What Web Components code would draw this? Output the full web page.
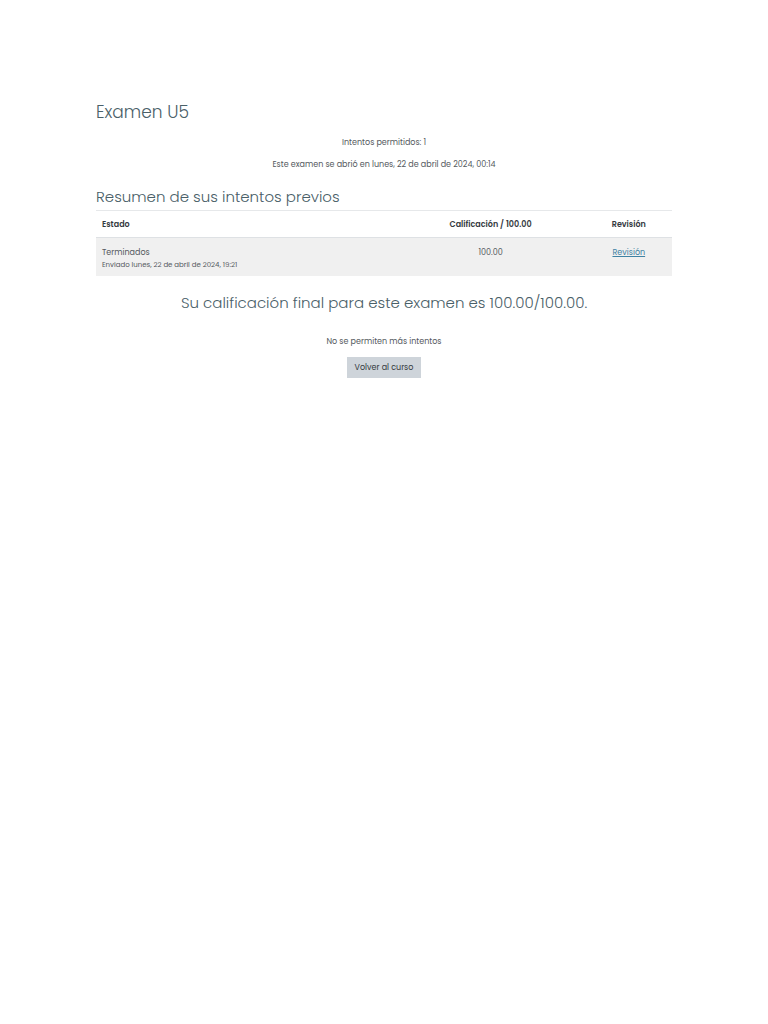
<!DOCTYPE html>
<html lang="es">
<head>
<meta charset="utf-8">
<meta name="viewport" content="width=device-width, initial-scale=1">
<title>Examen U5</title>
<style>
  body {
    margin: 0;
    background: #fff;
    color: #54595e;
    font-family: Poppins, Inter, "Open Sans", sans-serif;
    font-size: 8px;
    line-height: 12px;
  }
</style>
</head>
<body>

<quiz-page>
  <quiz-heading level="1">Examen U5</quiz-heading>
  <quiz-info>
    <p>Intentos permitidos: 1</p>
    <p>Este examen se abrió en lunes, 22 de abril de 2024, 00:14</p>
  </quiz-info>
  <quiz-heading level="2">Resumen de sus intentos previos</quiz-heading>
  <attempt-table state="Terminados" sent="Enviado lunes, 22 de abril de 2024, 19:21" grade="100.00" max="100.00"></attempt-table>
  <quiz-feedback>
    <span slot="grade">Su calificación final para este examen es 100.00/100.00.</span>
    <span slot="notice">No se permiten más intentos</span>
    <course-button>Volver al curso</course-button>
  </quiz-feedback>
</quiz-page>

<script>
class QuizPage extends HTMLElement {
  constructor() {
    super();

    this.attachShadow({mode: 'open'});
    this.shadowRoot.innerHTML = `
      <style>
        :host {
          display: block;
          padding: 100px 12.5%;
        }
      </style>
      <main><slot></slot></main>
    `;
  }
}

class QuizHeading extends HTMLElement {
  constructor() {
    super();

    this.attachShadow({mode: 'open'});
  }

  connectedCallback() {
    const tag = this.getAttribute('level') === '1' ? 'h1' : 'h2';

    this.shadowRoot.innerHTML = `
      <style>
        :host {
          display: block;
          color: #4a6068;
        }
        h1, h2 {
          margin: 0;
          font-weight: 300;
        }
        h1 {
          font-size: 17px;
          line-height: 24px;
        }
        h2 {
          margin-bottom: 2px;
          font-size: 15px;
          line-height: 22px;
        }
      </style>
      <${tag}><slot></slot></${tag}>
    `;
  }
}

class QuizInfo extends HTMLElement {
  constructor() {
    super();

    this.attachShadow({mode: 'open'});
    this.shadowRoot.innerHTML = `
      <style>
        :host {
          display: flex;
          flex-direction: column;
          gap: 10px;
          padding: 13px 0 15px;
          text-align: center;
        }
        ::slotted(p) {
          margin: 0;
        }
      </style>
      <slot></slot>
    `;
  }
}

class AttemptTable extends HTMLElement {
  constructor() {
    super();

    this.attachShadow({mode: 'open'});
  }

  connectedCallback() {
    const state = this.getAttribute('state');
    const sent = this.getAttribute('sent');
    const grade = this.getAttribute('grade');
    const max = this.getAttribute('max');

    this.shadowRoot.innerHTML = `
      <style>
        :host {
          display: block;
        }
        table {
          width: 100%;
          table-layout: fixed;
          border-collapse: collapse;
          font-size: inherit;
        }
        .col-state {
          width: 52%;
        }
        .col-grade {
          width: 33%;
        }
        th, td {
          padding: 8px 6px 6px;
          border-top: 1px solid #e6e8ea;
          text-align: center;
          vertical-align: top;
        }
        th {
          border-bottom: 1px solid #dee1e4;
          color: #34393e;
          font-weight: 600;
        }
        td {
          padding: 9px 6px 6px;
          background: #f0f0f0;
        }
        th:first-child, td:first-child {
          text-align: left;
        }
        .sent {
          display: block;
          font-size: 7px;
          line-height: 11px;
        }
        a {
          color: #3f82a3;
        }
      </style>
      <table>
        <colgroup>
          <col class="col-state">
          <col class="col-grade">
          <col>
        </colgroup>
        <thead>
          <tr>
            <th scope="col">Estado</th>
            <th scope="col">Calificación / ${max}</th>
            <th scope="col">Revisión</th>
          </tr>
        </thead>
        <tbody>
          <tr>
            <td>${state}<span class="sent">${sent}</span></td>
            <td>${grade}</td>
            <td><a href="#revision">Revisión</a></td>
          </tr>
        </tbody>
      </table>
    `;
  }
}

class QuizFeedback extends HTMLElement {
  constructor() {
    super();

    this.attachShadow({mode: 'open'});
    this.shadowRoot.innerHTML = `
      <style>
        :host {
          display: block;
          padding-top: 15px;
          text-align: center;
        }
        h3 {
          margin: 0 0 21px;
          color: #4a6068;
          font-size: 15px;
          font-weight: 300;
          line-height: 24px;
        }
        p {
          margin: 0 0 9px;
        }
      </style>
      <h3><slot name="grade"></slot></h3>
      <p><slot name="notice"></slot></p>
      <slot></slot>
    `;
  }
}

class CourseButton extends HTMLElement {
  constructor() {
    super();

    this.attachShadow({mode: 'open'});
    this.shadowRoot.innerHTML = `
      <style>
        :host {
          display: block;
        }
        button {
          padding: 5px 8px 4px;
          border: 0;
          background: #ced4da;
          color: #343a40;
          font: inherit;
          cursor: pointer;
        }
      </style>
      <button type="button"><slot></slot></button>
    `;
  }
}

customElements.define('quiz-page', QuizPage);
customElements.define('quiz-heading', QuizHeading);
customElements.define('quiz-info', QuizInfo);
customElements.define('attempt-table', AttemptTable);
customElements.define('quiz-feedback', QuizFeedback);
customElements.define('course-button', CourseButton);
</script>
</body>
</html>
